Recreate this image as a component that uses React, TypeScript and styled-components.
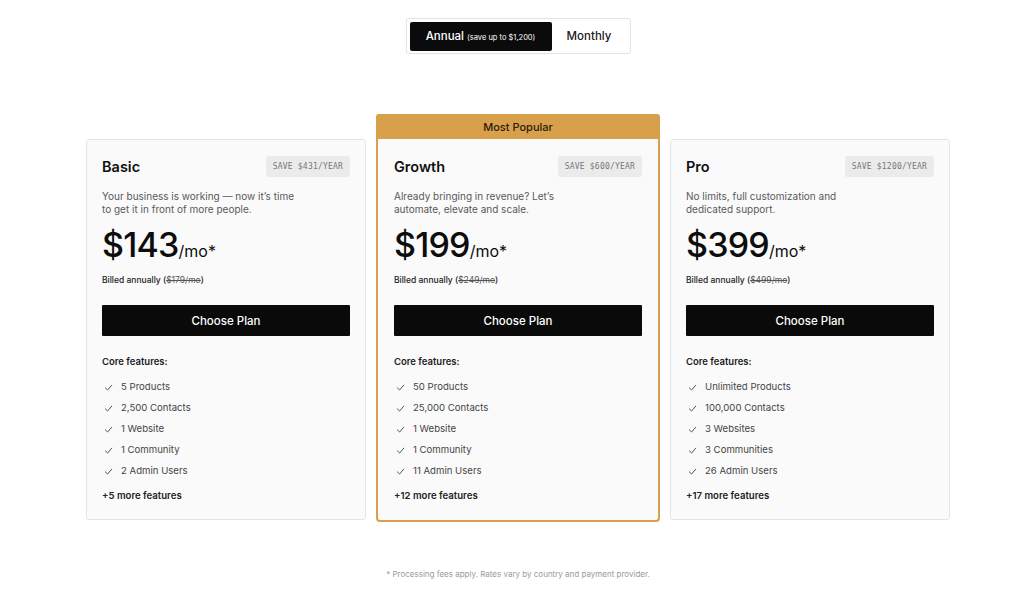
import React, { useState } from 'react';
import styled, { createGlobalStyle } from 'styled-components';

const GlobalStyle = createGlobalStyle`
  html, body {
    margin: 0;
    padding: 0;
    background: #ffffff;
    font-family: Inter, "Noto Sans", "Liberation Sans", sans-serif;
    color: #111111;
  }
  * { box-sizing: border-box; }
`;

interface Plan {
  name: string;
  save: string;
  description: string;
  price: string;
  was: string;
  features: string[];
  more: string;
  popular?: boolean;
}

const plans: Plan[] = [
  {
    name: 'Basic',
    save: 'SAVE $431/YEAR',
    description: 'Your business is working — now it\u2019s time\nto get it in front of more people.',
    price: '$143',
    was: '$179/mo',
    features: ['5 Products', '2,500 Contacts', '1 Website', '1 Community', '2 Admin Users'],
    more: '+5 more features',
  },
  {
    name: 'Growth',
    save: 'SAVE $600/YEAR',
    description: 'Already bringing in revenue? Let\u2019s\nautomate, elevate and scale.',
    price: '$199',
    was: '$249/mo',
    features: ['50 Products', '25,000 Contacts', '1 Website', '1 Community', '11 Admin Users'],
    more: '+12 more features',
    popular: true,
  },
  {
    name: 'Pro',
    save: 'SAVE $1200/YEAR',
    description: 'No limits, full customization and\ndedicated support.',
    price: '$399',
    was: '$499/mo',
    features: ['Unlimited Products', '100,000 Contacts', '3 Websites', '3 Communities', '26 Admin Users'],
    more: '+17 more features',
  },
];

const Check = () => (
  <svg width="9" height="9" viewBox="0 0 10 10" fill="none">
    <polyline points="1.5,5.4 4,7.8 8.6,2.4" stroke="#555" strokeWidth="1.1" strokeLinecap="round" strokeLinejoin="round" />
  </svg>
);

const App: React.FC = () => {
  const [billing, setBilling] = useState<'annual' | 'monthly'>('annual');

  return (
    <Page>
      <GlobalStyle />
      <Toggle>
        <ToggleButton active={billing === 'annual'} wide onClick={() => setBilling('annual')}>
          Annual <small>(save up to $1,200)</small>
        </ToggleButton>
        <ToggleButton active={billing === 'monthly'} onClick={() => setBilling('monthly')}>
          Monthly
        </ToggleButton>
      </Toggle>

      <Cards>
        {plans.map((p) => (
          <Column key={p.name} popular={p.popular}>
            {p.popular && <PopularTag>Most Popular</PopularTag>}
            <Card popular={p.popular}>
              <TitleRow>
                <PlanName>{p.name}</PlanName>
                <SaveBadge>{p.save}</SaveBadge>
              </TitleRow>
              <Description>{p.description}</Description>
              <Price>
                {p.price}
                <span>/mo*</span>
              </Price>
              <Billed>
                Billed annually (<s>{p.was}</s>)
              </Billed>
              <ChooseButton>Choose Plan</ChooseButton>
              <FeaturesTitle>Core features:</FeaturesTitle>
              <FeatureList>
                {p.features.map((f) => (
                  <Feature key={f}>
                    <Check />
                    {f}
                  </Feature>
                ))}
              </FeatureList>
              <More>{p.more}</More>
            </Card>
          </Column>
        ))}
      </Cards>

      <Footnote>* Processing fees apply. Rates vary by country and payment provider.</Footnote>
    </Page>
  );
};

const Page = styled.div`
  display: flex;
  flex-direction: column;
  align-items: center;
  padding: 18px 0 0 12px;
  min-height: 595px;
`;

const Toggle = styled.div`
  display: flex;
  align-items: center;
  width: 225px;
  height: 36px;
  padding: 3px;
  border: 1px solid #e3e3e3;
  border-radius: 3px;
  background: #fff;
`;

const ToggleButton = styled.button<{ active?: boolean; wide?: boolean }>`
  height: 29px;
  flex: ${(p) => (p.wide ? '0 0 142px' : '1')};
  border: none;
  border-radius: 2px;
  background: ${(p) => (p.active ? '#0b0b0b' : 'transparent')};
  color: ${(p) => (p.active ? '#ffffff' : '#1a1a1a')};
  font-family: inherit;
  font-size: 11.5px;
  font-weight: 500;
  cursor: pointer;
  padding: 0;
  white-space: nowrap;

  small {
    font-size: 7.5px;
    font-weight: 400;
  }
`;

const Cards = styled.div`
  display: flex;
  align-items: flex-start;
  gap: 10px;
  margin-top: 60px;
`;

const Column = styled.div<{ popular?: boolean }>`
  display: flex;
  flex-direction: column;
  padding-top: ${(p) => (p.popular ? '0' : '25px')};
`;

const PopularTag = styled.div`
  height: 25px;
  display: flex;
  align-items: center;
  justify-content: center;
  background: #d9a04c;
  border-radius: 3px 3px 0 0;
  font-size: 11px;
  font-weight: 500;
  color: #2a1d0c;
`;

const Card = styled.div<{ popular?: boolean }>`
  width: ${(p) => (p.popular ? '284px' : '280px')};
  display: flex;
  flex-direction: column;
  background: #fafafa;
  border: ${(p) => (p.popular ? '2px solid #d9a04c' : '1px solid #e4e4e4')};
  border-top: ${(p) => (p.popular ? 'none' : '1px solid #e4e4e4')};
  border-radius: ${(p) => (p.popular ? '0 0 4px 4px' : '3px')};
  padding: ${(p) => (p.popular ? '17px 16px 17px' : '16px 15px 16px')};
`;

const TitleRow = styled.div`
  display: flex;
  align-items: center;
  justify-content: space-between;
  height: 21px;
`;

const PlanName = styled.div`
  font-size: 14.5px;
  font-weight: 600;
  color: #111;
`;

const SaveBadge = styled.div`
  height: 21px;
  display: flex;
  align-items: center;
  padding: 0 7px;
  background: #ebebeb;
  border-radius: 2px;
  font-family: "DejaVu Sans Mono", "Liberation Mono", monospace;
  font-size: 8px;
  color: #777;
  letter-spacing: 0.2px;
`;

const Description = styled.p`
  margin: 13px 0 0;
  font-size: 10px;
  line-height: 13px;
  color: #595959;
  white-space: pre-line;
`;

const Price = styled.div`
  margin-top: 9px;
  height: 40px;
  display: flex;
  align-items: baseline;
  font-size: 34px;
  font-weight: 500;
  letter-spacing: -0.8px;
  line-height: 40px;
  color: #0d0d0d;

  span {
    font-size: 16px;
    font-weight: 400;
    letter-spacing: 0;
  }
`;

const Billed = styled.div`
  margin-top: 9px;
  font-size: 8.5px;
  line-height: 12px;
  font-weight: 500;
  color: #222;

  s {
    color: #555;
    font-weight: 400;
  }
`;

const ChooseButton = styled.button`
  margin-top: 19px;
  height: 31px;
  width: 100%;
  border: none;
  border-radius: 1px;
  background: #0a0a0a;
  color: #fff;
  font-family: inherit;
  font-size: 11.5px;
  font-weight: 500;
  cursor: pointer;
`;

const FeaturesTitle = styled.div`
  margin-top: 19px;
  font-size: 9.5px;
  line-height: 14px;
  font-weight: 600;
  color: #222;
`;

const FeatureList = styled.ul`
  list-style: none;
  margin: 11px 0 0;
  padding: 0 0 0 2px;
  display: flex;
  flex-direction: column;
  gap: 7px;
`;

const Feature = styled.li`
  display: flex;
  align-items: center;
  gap: 8px;
  font-size: 9.6px;
  line-height: 14px;
  color: #444;
`;

const More = styled.div`
  margin-top: 11px;
  font-size: 9.6px;
  line-height: 14px;
  font-weight: 600;
  color: #222;
`;

const Footnote = styled.p`
  margin: 46px 0 0;
  font-size: 8px;
  line-height: 12px;
  color: #9a9a9a;
`;

export default App;
